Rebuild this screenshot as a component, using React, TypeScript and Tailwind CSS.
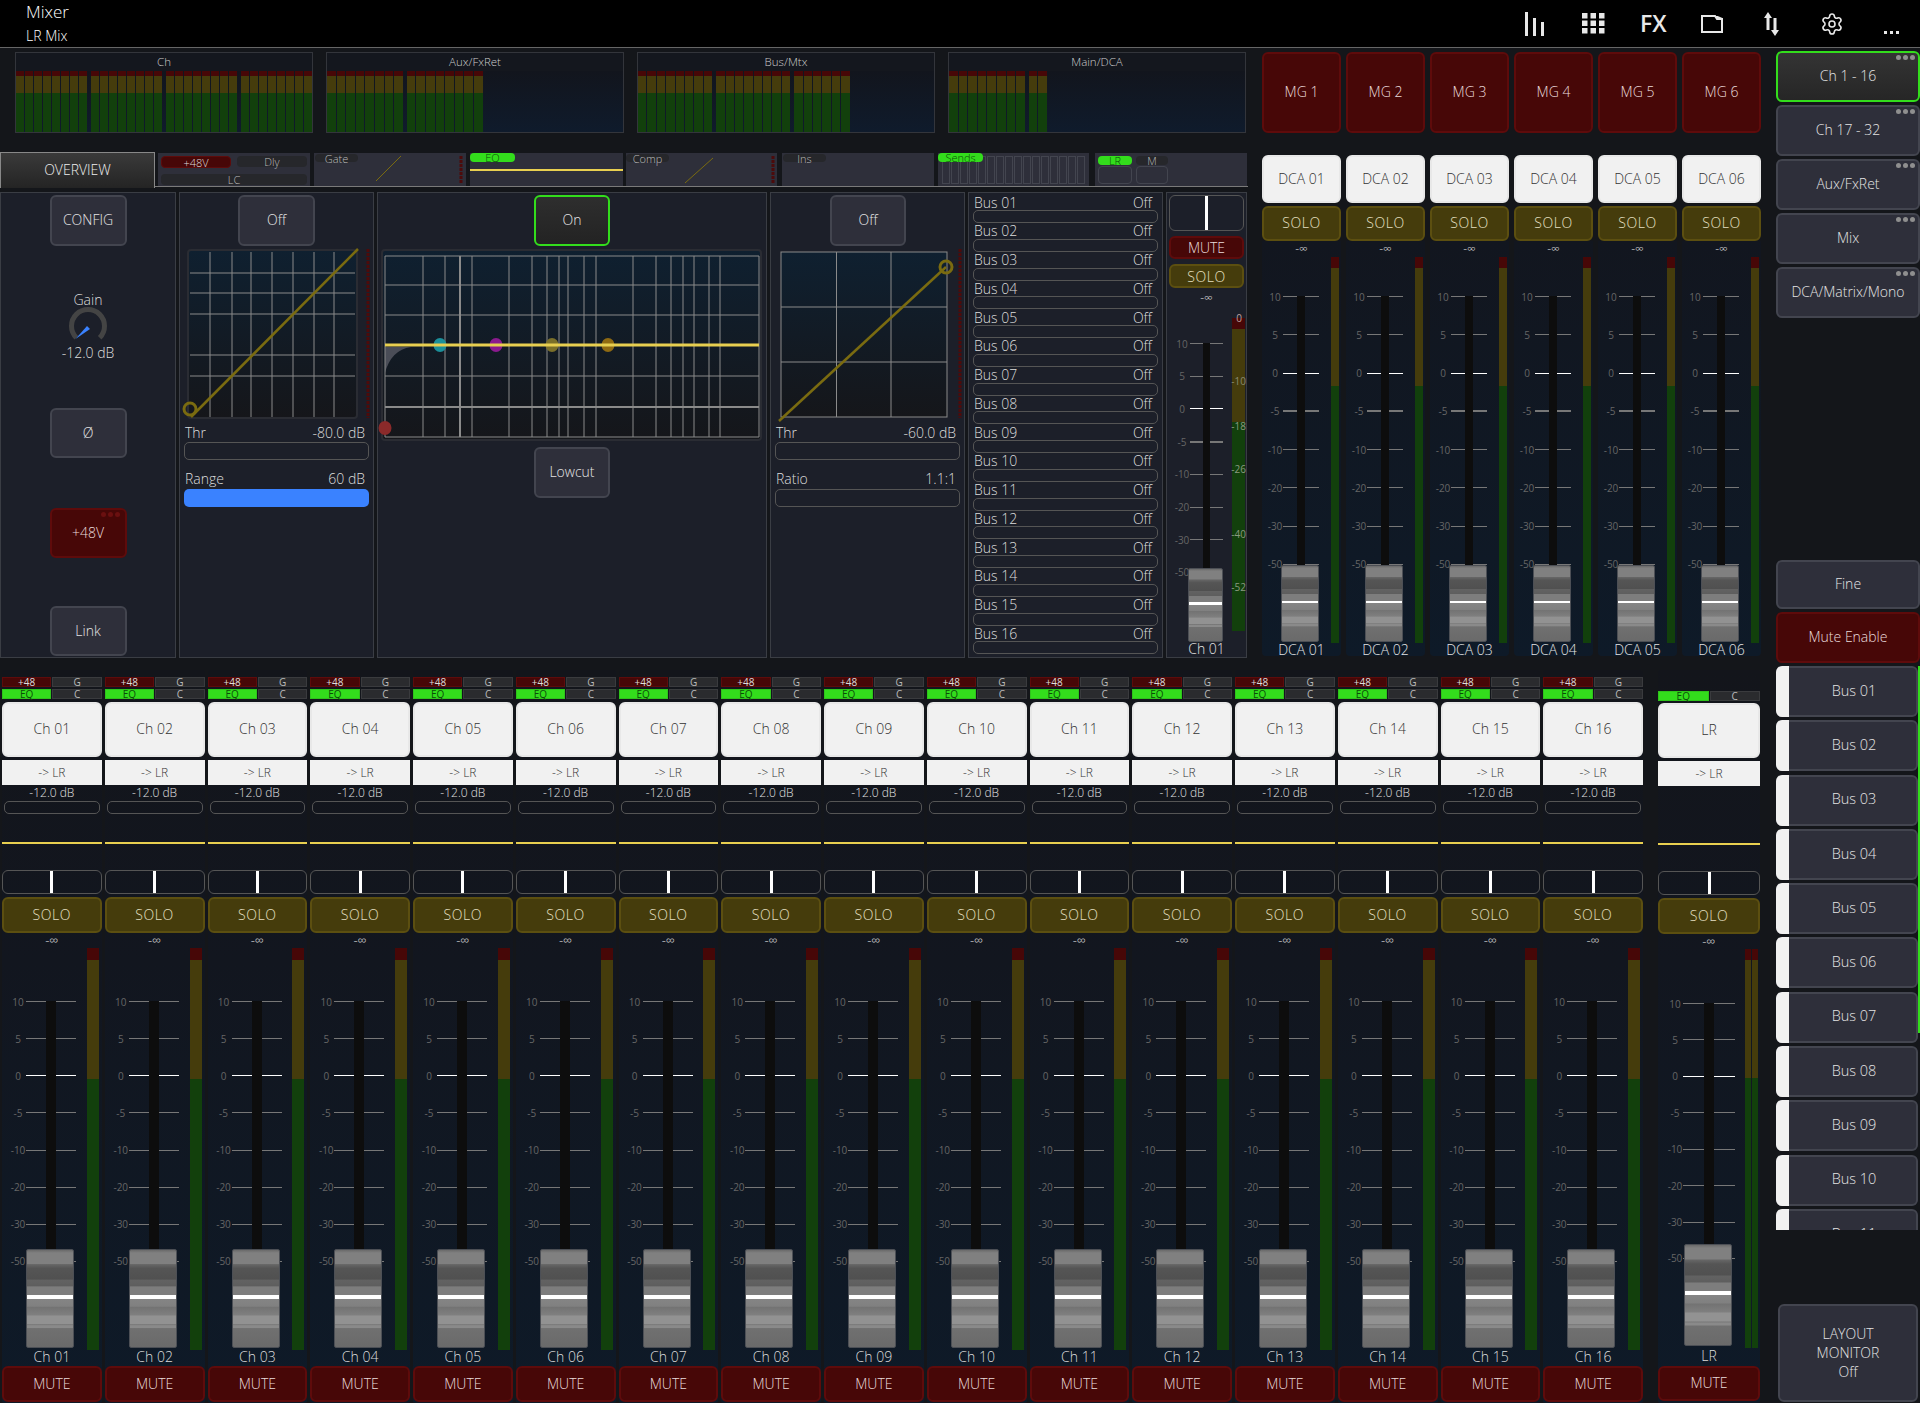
import { Settings } from 'lucide-react';

const btn = 'flex items-center justify-center rounded-[6px] border-2 border-[#43454f] bg-[#2e2f3a] pb-[2px] text-[14px] text-[#e4e4e4]';
const solo = 'flex items-center justify-center rounded-[6px] border-2 border-[#5c4f10] bg-[#453c0c] pb-[2px] text-[14px] tracking-[0.6px] text-[#e6e0c4]';
const mute = 'flex items-center justify-center rounded-[6px] border-2 border-[#5e0b0b] bg-[#470707] pb-[2px] text-[14px] text-[#eadcdc]';
const white = 'flex items-center justify-center rounded-[6px] border-2 border-[#e8e8e8] bg-[#f1f1f1] pb-[2px] text-[14px] text-[#333]';
const slider = 'rounded-[5px] border border-[#555] ';
const panel = 'border border-[#3a3d44] bg-[#1c1f29]';
const capBg = 'rounded-[2px] border border-[#4c4f55] bg-[linear-gradient(to_bottom,#6a6a6a_0%,#808080_3%,#808080_14%,#666_15%,#555_19%,#505050_30%,#626262_31%,#5e5e5e_37%,#7d7d7d_38%,#7d7d7d_46%,#fff_46%,#fff_50%,#858585_50%,#808080_58%,#737373_59%,#7f7f7f_67%,#929292_68%,#929292_76%,#777_77%,#8a8a8a_78%,#8a8a8a_80%,#707070_81%,#6a6a6a_100%)]';

const ticks = ['10', '5', '0', '-5', '-10', '-20', '-30', '-50'];

const faders = {
  ch: { area: 'h-[402px]', list: 'mt-[53px] h-[261px]', label: 'w-[24px] pl-[8px]', line: 'w-[20px]', gap: 'w-[10px]', track: 'left-[44px] w-[10px] top-[53px] h-[248px]', cap: 'left-[24px] w-[48px] top-[301px] h-[99px]', meter: 'h-[402px] w-[12px] mr-[3px]', red: 'h-[12px]', yellow: 'h-[119px]' },
  dca: { area: 'h-[386px]', list: 'mt-[39px] h-[269px]', label: 'w-[21px] pl-[5px]', line: 'w-[14px]', gap: 'w-[8px]', track: 'left-[35px] w-[8px] top-[39px] h-[269px]', cap: 'left-[19px] w-[38px] top-[308px] h-[77px]', meter: 'h-[386px] w-[8px] mr-[2px]', red: 'h-[11px]', yellow: 'h-[118px]' },
  one: { area: 'h-[324px]', list: 'mt-[25px] h-[230px]', label: 'w-[23px] pl-[7px]', line: 'w-[13px]', gap: 'w-[7px]', track: 'left-[36px] w-[7px] top-[25px] h-[225px]', cap: 'left-[21px] w-[35px] top-[250px] h-[74px]', meter: 'h-[313px] w-[13px] mr-[1px]', red: 'h-[11px]', yellow: 'h-[93px]' },
  lr: { area: 'h-[399px]', list: 'mt-[54px] h-[256px]', label: 'w-[25px] pl-[9px]', line: 'w-[21px]', gap: 'w-[10px]', track: 'left-[46px] w-[10px] top-[54px] h-[241px]', cap: 'left-[26px] w-[48px] top-[295px] h-[102px]', meter: 'h-[399px] w-[6px]', red: 'h-[11px]', yellow: 'h-[118px]' },
};

const MeterBar = ({ f }: { f: { meter: string; red: string; yellow: string } }) => (
  <div className={`flex shrink-0 flex-col ${f.meter}`}>
    <div className={`bg-[#470707] ${f.red}`} />
    <div className={`bg-[#453c0c] ${f.yellow}`} />
    <div className="flex-1 bg-[#12400c]" />
  </div>
);

const Fader = ({ kind, thick }: { kind: keyof typeof faders; thick?: boolean }) => {
  const f = faders[kind];
  return (
    <div className={`relative flex justify-between ${f.area}`}>
      <div className={`flex flex-col justify-between ${f.list}`}>
        {ticks.map(t => {
          const color = t === '0' ? 'bg-white' : 'bg-[#777]';
          const h = thick && t === '-5' ? 'h-[2px]' : 'h-[1px]';
          return (
            <div key={t} className="flex h-[1px] items-center">
              <div className={`flex justify-center whitespace-nowrap text-[10px] font-normal leading-none text-[#666] ${f.label}`}>{t}</div>
              <div className={`${f.line} ${h} ${color}`} />
              <div className={f.gap} />
              <div className={`${f.line} ${h} ${color}`} />
            </div>
          );
        })}
      </div>
      <div className={`absolute bg-[#0d0d0d] ${f.track}`} />
      <div className={`absolute ${capBg} ${f.cap}`} />
      {kind === 'lr' ? (
        <div className="mr-[2px] flex gap-[1px]">
          <MeterBar f={f} />
          <MeterBar f={f} />
        </div>
      ) : (
        <MeterBar f={f} />
      )}
    </div>
  );
};

const Tag = ({ text, kind }: { text: string; kind: 'red' | 'green' | 'off' }) => {
  const c = kind === 'red' ? 'bg-[#470707] border-[#5e0b0b] text-[#ddd]' : kind === 'green' ? 'bg-[#33dd1c] border-[#2fc41b] text-[#0b4d08]' : 'bg-[#2a2b2e] border-[#3a3b3e] text-[#bbb]';
  return <div className={`flex h-[10px] items-center justify-center border text-[10px] font-normal leading-none ${c}`}>{text}</div>;
};

const Pan = () => (
  <div className={`mt-[26px] flex h-[24px] justify-center rounded-[6px] border border-[#555]`}>
    <div className="h-full w-[3px] bg-white" />
  </div>
);

const Strip = ({ name }: { name: string }) => (
  <div className="flex h-[733px] flex-col rounded-[2px] bg-[linear-gradient(to_bottom,#13151b_0%,#12161f_40%,#0e1a28_100%)] pt-[7px]">
    <div className="grid grid-cols-2 gap-x-[1px] gap-y-[2px]">
      <Tag text="+48" kind="red" />
      <Tag text="G" kind="off" />
      <Tag text="EQ" kind="green" />
      <Tag text="C" kind="off" />
    </div>
    <div className={`mt-[3px] h-[55px] ${white}`}>{name}</div>
    <div className="mt-[3px] flex h-[25px] items-center justify-center bg-[#f1f1f1] text-[12px] text-[#333]">-&gt; LR</div>
    <div className="flex h-[16px] items-center justify-center text-[12px] text-[#e0e0e0]">-12.0 dB</div>
    <div className={`mx-[2px] h-[13px] ${slider}`} />
    <div className="mt-[28px] h-[2px] bg-[#e8cf50]" />
    <Pan />
    <div className={`mt-[3px] h-[36px] ${solo}`}>SOLO</div>
    <div className="flex h-[15px] items-center justify-center text-[13px] leading-none text-[#ddd]">-∞</div>
    <Fader kind="ch" />
    <div className="flex h-[14px] items-center justify-center text-[14px] leading-none text-[#ddd]">{name}</div>
    <div className={`mt-[2px] h-[36px] ${mute}`}>MUTE</div>
  </div>
);

const LrStrip = () => (
  <div className="ml-[15px] flex h-[733px] w-[102px] flex-col rounded-[2px] bg-[linear-gradient(to_bottom,#13151b_0%,#12161f_40%,#0e1a28_100%)] pt-[21px]">
    <div className="grid grid-cols-2 gap-x-[1px]">
      <Tag text="EQ" kind="green" />
      <Tag text="C" kind="off" />
    </div>
    <div className={`mt-[2px] h-[55px] ${white}`}>LR</div>
    <div className="mt-[3px] flex h-[25px] items-center justify-center bg-[#f1f1f1] text-[12px] text-[#333]">-&gt; LR</div>
    <div className="mt-[57px] h-[2px] bg-[#e8cf50]" />
    <Pan />
    <div className={`mt-[3px] h-[36px] ${solo}`}>SOLO</div>
    <div className="flex h-[15px] items-center justify-center text-[13px] leading-none text-[#ddd]">-∞</div>
    <Fader kind="lr" />
    <div className="flex h-[16px] items-center justify-center text-[14px] leading-none text-[#ddd]">LR</div>
    <div className={`mt-[2px] h-[35px] ${mute}`}>MUTE</div>
  </div>
);

const DcaStrip = ({ i }: { i: number }) => {
  const name = `DCA 0${i}`;
  return (
    <div className="w-[79px]">
      <div className={`h-[48px] ${white}`}>{name}</div>
      <div className={`mt-[3px] h-[35px] ${solo}`}>SOLO</div>
      <div className="rounded-b-[4px] bg-[linear-gradient(to_bottom,#12161f,#0e1a28)]">
        <div className="flex h-[16px] items-center justify-center text-[12px] leading-none text-[#ddd]">-∞</div>
        <Fader kind="dca" thick />
        <div className="flex h-[13px] items-center justify-center text-[14px] leading-none text-[#e4e4e4]">{name}</div>
      </div>
    </div>
  );
};

const MeterGroup = ({ title, groups, step }: { title: string; groups: number[]; step: string }) => (
  <div className="flex h-[81px] w-[298px] flex-col border border-[#33353b]">
    <div className="flex h-[18px] items-center justify-center bg-[#14171e] text-[11.5px] text-[#ccc]">{title}</div>
    <div className="flex flex-1 gap-[4px] bg-[linear-gradient(to_bottom,#12151d,#0f1b2c)]">
      {groups.map((n, g) => (
        <div key={g} className="flex gap-[1px]">
          {Array.from({ length: n }).map((_, b) => (
            <div key={b} className={`flex flex-col ${step}`}>
              <div className="h-[5px] bg-[#470707]" />
              <div className="h-[17px] bg-[#453c0c]" />
              <div className="flex-1 bg-[#12400c]" />
            </div>
          ))}
        </div>
      ))}
    </div>
  </div>
);

const Pill = ({ text, on, cls }: { text: string; on?: boolean; cls: string }) => (
  <div className={`flex items-center justify-center rounded-[4px] text-[11px] leading-none ${on ? 'bg-[#33dd1c] text-[#0b4d08]' : 'bg-[#26272b] text-[#bbb]'} ${cls}`}>{text}</div>
);

const RedDash = ({ x, y1, y2 }: { x: number; y1: number; y2: number }) => (
  <line x1={x} x2={x} y1={y1} y2={y2} stroke="#4d0b0b" strokeWidth={3} strokeDasharray="3 1" />
);

const GateGraph = () => {
  const vs = [211, 233, 252, 273, 294, 315, 335];
  const hs = [273, 293, 314, 355, 376];
  return (
    <svg width={190} height={177} viewBox="181 246 190 177" className="block">
      <defs>
        <linearGradient id="gg" x1="0" y1="0" x2="0" y2="1">
          <stop offset="0" stopColor="#0f2030" />
          <stop offset="1" stopColor="#15161a" />
        </linearGradient>
      </defs>
      <rect x={189} y={250} width={169} height={168} rx={3} fill="url(#gg)" stroke="#2a2c33" strokeWidth={2} />
      {vs.map(x => <line key={x} x1={x} x2={x} y1={252} y2={417} stroke="#8a8a8a" />)}
      {hs.map(y => <line key={y} x1={191} x2={356} y1={y} y2={y} stroke="#8a8a8a" />)}
      <line x1={192} y1={417} x2={359} y2={249} stroke="#7a6b10" strokeWidth={2.5} />
      <circle cx={191} cy={409} r={6} fill="none" stroke="#7a6b10" strokeWidth={3} />
      <RedDash x={369} y1={249} y2={418} />
    </svg>
  );
};

const EqGraph = () => {
  const vs = [424, 446, 461, 473, 510, 533, 548, 560, 569, 585, 597, 634, 657, 672, 684, 695, 710, 721];
  const hs = [256, 285, 315, 376, 407, 437];
  const dots = [[441, '#1b8f9a'], [497, '#8b1a8e'], [553, '#7a6f2a'], [609, '#8f6a12']] as const;
  return (
    <svg width={385} height={196} viewBox="379 246 385 196" className="block">
      <defs>
        <linearGradient id="eq" x1="0" y1="0" x2="0" y2="1">
          <stop offset="0" stopColor="#0f2030" />
          <stop offset="1" stopColor="#15161a" />
        </linearGradient>
      </defs>
      <rect x={383} y={250} width={379} height={190} rx={3} fill="url(#eq)" stroke="#2a2c33" strokeWidth={2} />
      <path d="M386 373 Q392 350 412 347 L386 347 Z" fill="#4a4d57" />
      {vs.map(x => <line key={x} x1={x} x2={x} y1={256} y2={437} stroke="#8a8a8a" strokeWidth={x === 461 ? 2 : 1} />)}
      <line x1={386} x2={386} y1={256} y2={437} stroke="#8a8a8a" />
      <line x1={760} x2={760} y1={256} y2={437} stroke="#8a8a8a" />
      {hs.map(y => <line key={y} x1={386} x2={760} y1={y} y2={y} stroke="#8a8a8a" strokeWidth={y === 407 ? 2 : 1} />)}
      {dots.map(([x, c]) => <ellipse key={x} cx={x} cy={345} rx={6.5} ry={7} fill={c} />)}
      <line x1={386} x2={760} y1={345} y2={345} stroke="#e8cf50" strokeWidth={3} />
      <ellipse cx={386} cy={428} rx={6.5} ry={7} fill="#8a2a2a" />
    </svg>
  );
};

const CompGraph = () => (
  <svg width={190} height={177} viewBox="776 246 190 177" className="block">
    <defs>
      <linearGradient id="cg" x1="0" y1="0" x2="0" y2="1">
        <stop offset="0" stopColor="#0f2030" />
        <stop offset="1" stopColor="#15161a" />
      </linearGradient>
    </defs>
    <rect x={782} y={252} width={166} height={165} fill="url(#cg)" stroke="#8a8a8a" />
    <line x1={837.5} x2={837.5} y1={252} y2={417} stroke="#8a8a8a" />
    <line x1={892} x2={892} y1={252} y2={417} stroke="#8a8a8a" />
    <line x1={782} x2={948} y1={307} y2={307} stroke="#8a8a8a" />
    <line x1={782} x2={948} y1={362} y2={362} stroke="#8a8a8a" />
    <line x1={780} y1={421} x2={947} y2={267} stroke="#7a6b10" strokeWidth={2.5} />
    <circle cx={947} cy={267} r={6} fill="none" stroke="#7a6b10" strokeWidth={3} />
    <RedDash x={961} y1={249} y2={418} />
  </svg>
);

const Knob = () => (
  <svg width={44} height={36} viewBox="0 0 44 36" className="-mt-[5px] block">
    <path d="M10.3 32.7 A16.5 16.5 0 1 1 33.7 32.7" fill="none" stroke="#444" strokeWidth={5} />
    <path d="M9.5 34 L21 21 L24 24 Z" fill="#3a82ff" />
  </svg>
);

const Labeled = ({ l, r }: { l: string; r: string }) => (
  <div className="flex h-[14px] items-center justify-between px-[1px] text-[14px] leading-none text-[#ddd]">
    <span>{l}</span>
    <span className="mr-[3px]">{r}</span>
  </div>
);

const BusRow = ({ i }: { i: number }) => (
  <div className="flex h-[29px] flex-col">
    <div className="flex h-[15px] items-center justify-between px-[1px] pr-[6px] text-[14px] leading-none text-[#ddd]">
      <span>Bus {String(i).padStart(2, '0')}</span>
      <span>Off</span>
    </div>
    <div className={`h-[13px] ${slider}`} />
  </div>
);

const OverviewPanels = () => (
  <div className="mt-[5px] flex h-[466px] gap-[3px] overflow-hidden">
    {/* input */}
    <div className={`flex w-[176px] flex-col items-center pt-[2px] ${panel}`}>
      <div className={`h-[51px] w-[77px] ${btn}`}>CONFIG</div>
      <div className="mt-[44px] h-[20px] text-[14px] leading-[20px] text-[#ddd]">Gain</div>
      <Knob />
      <div className="mt-[2px] text-[14px] leading-[20px] text-[#ddd]">-12.0 dB</div>
      <div className={`mt-[45px] h-[50px] w-[77px] ${btn}`}>Ø</div>
      <div className={`relative mt-[50px] h-[50px] w-[77px] ${mute}`}>
        +48V
        <div className="absolute right-[5px] top-[2px] flex gap-[2px]">
          {[0, 1, 2].map(d => <div key={d} className="h-[5px] w-[5px] rounded-full bg-[#6a1010]" />)}
        </div>
      </div>
      <div className={`mt-[48px] h-[50px] w-[77px] ${btn}`}>Link</div>
    </div>
    {/* gate */}
    <div className={`flex w-[195px] flex-col pt-[2px] ${panel}`}>
      <div className={`mx-auto h-[51px] w-[77px] ${btn}`}>Off</div>
      <GateGraph />
      <div className="mt-[3px] px-[4px]">
        <Labeled l="Thr" r="-80.0 dB" />
        <div className={`mt-[2px] h-[18px] ${slider}`} />
        <div className="mt-[12px]"><Labeled l="Range" r="60 dB" /></div>
        <div className="mt-[3px] h-[18px] rounded-[5px] bg-[#3a82ff]" />
      </div>
    </div>
    {/* eq */}
    <div className={`flex w-[390px] flex-col pt-[2px] ${panel}`}>
      <div className="ml-[156px] flex h-[51px] w-[76px] items-center justify-center rounded-[6px] border-2 border-[#33dd1c] bg-[linear-gradient(to_bottom,#2e2e2e,#232323)] pb-[2px] text-[14px] text-[#e4e4e4]">On</div>
      <EqGraph />
      <div className={`ml-[156px] mt-[5px] h-[51px] w-[76px] ${btn}`}>Lowcut</div>
    </div>
    {/* comp */}
    <div className={`flex w-[195px] flex-col pt-[2px] ${panel}`}>
      <div className={`ml-[59px] h-[51px] w-[76px] ${btn}`}>Off</div>
      <div className="ml-[4px]"><CompGraph /></div>
      <div className="mt-[3px] px-[4px]">
        <Labeled l="Thr" r="-60.0 dB" />
        <div className={`mt-[2px] h-[18px] ${slider}`} />
        <div className="mt-[12px]"><Labeled l="Ratio" r="1.1:1" /></div>
        <div className={`mt-[3px] h-[18px] ${slider}`} />
      </div>
    </div>
    {/* sends */}
    <div className={`flex w-[195px] flex-col justify-between px-[4px] pb-[2px] pt-[2px] ${panel}`}>
      {Array.from({ length: 16 }).map((_, i) => <BusRow key={i} i={i + 1} />)}
    </div>
    {/* channel */}
    <div className={`relative flex w-[81px] flex-col pt-[2px] ${panel}`}>
      <div className="mx-[2px] flex h-[36px] justify-center rounded-[6px] border border-[#555]">
        <div className="h-full w-[3px] bg-white" />
      </div>
      <div className={`mx-[2px] mt-[5px] h-[23px] ${mute} !pb-0`}>MUTE</div>
      <div className={`mx-[2px] mt-[5px] h-[24px] ${solo} !pb-0`}>SOLO</div>
      <div className="flex h-[30px] items-start justify-center pt-[4px] text-[12px] leading-none text-[#ddd]">-∞</div>
      <Fader kind="one" thick />
      <div className="absolute right-[4px] top-[120px] text-[10px] font-normal leading-none text-[#c0a0a0]">0</div>
      <div className="absolute right-[0px] top-[183px] text-[10px] font-normal leading-none text-[#8a8a70]">-10</div>
      <div className="absolute right-[0px] top-[228px] text-[10px] font-normal leading-none text-[#8a9a80]">-18</div>
      <div className="absolute right-[0px] top-[271px] text-[10px] font-normal leading-none text-[#8a9a80]">-26</div>
      <div className="absolute right-[0px] top-[336px] text-[10px] font-normal leading-none text-[#8a9a80]">-40</div>
      <div className="absolute right-[0px] top-[389px] text-[10px] font-normal leading-none text-[#8a9a80]">-52</div>
      <div className="flex h-[14px] items-center justify-center text-[14px] leading-none text-[#e4e4e4]">Ch 01</div>
    </div>
  </div>
);

const cell = 'relative h-[33px] bg-[#2e2f3a]';

const TabRow = () => (
  <div className="mt-[19px] flex h-[35px] border-b border-[#7a7a7a]">
    <div className="flex h-[36px] w-[155px] items-center justify-center border-x border-t border-[#888] bg-[linear-gradient(to_bottom,#3a3a3a,#242424)] pb-[2px] text-[14px] text-[#eee]">OVERVIEW</div>
    <div className={`ml-[3px] grid w-[152px] grid-cols-2 gap-x-[6px] gap-y-[5px] px-[3px] pt-[3px] ${cell} mt-[1px]`}>
      <Pill text="+48V" cls="h-[12px] border border-[#5e0b0b] !bg-[#470707] !text-[#ddd]" />
      <Pill text="Dly" cls="h-[11px]" />
      <Pill text="LC" cls="col-span-2 h-[11px]" />
    </div>
    <div className={`ml-[4px] w-[152px] ${cell} mt-[1px]`}>
      <Pill text="Gate" cls="absolute left-[1px] top-[1px] h-[8px] w-[43px]" />
      <svg width={152} height={33} className="block">
        <line x1={62} y1={28} x2={87} y2={3} stroke="#7a6b10" />
        <RedDash x={147} y1={3} y2={31} />
      </svg>
    </div>
    <div className={`ml-[4px] w-[153px] ${cell} mt-[1px]`}>
      <Pill text="EQ" on cls="absolute left-0 top-0 h-[9px] w-[45px]" />
      <div className="mt-[16px] h-[2px] bg-[#e8cf50]" />
    </div>
    <div className={`ml-[3px] w-[151px] ${cell} mt-[1px]`}>
      <Pill text="Comp" cls="absolute left-0 top-[1px] h-[8px] w-[43px]" />
      <svg width={151} height={33} className="block">
        <line x1={59} y1={30} x2={87} y2={5} stroke="#7a6b10" />
        <RedDash x={147} y1={3} y2={31} />
      </svg>
    </div>
    <div className={`ml-[5px] w-[152px] ${cell} mt-[1px]`}>
      <Pill text="Ins" cls="absolute left-[1px] top-[1px] h-[8px] w-[43px]" />
    </div>
    <div className={`ml-[4px] w-[151px] ${cell} mt-[1px]`}>
      <Pill text="Sends" on cls="absolute left-0 top-0 h-[9px] w-[45px]" />
      <div className="flex gap-[1px] pl-[4px] pt-[3px]">
        {Array.from({ length: 16 }).map((_, i) => <div key={i} className="h-[28px] w-[8px] border border-[#43454f]" />)}
      </div>
    </div>
    <div className={`ml-[6px] w-[152px] ${cell} mt-[1px] pl-[3px] pt-[3px]`}>
      <div className="flex gap-[4px]">
        <Pill text="LR" on cls="h-[9px] w-[34px]" />
        <Pill text="M" cls="h-[9px] w-[32px]" />
      </div>
      <div className="mt-[1px] flex gap-[4px]">
        <div className="h-[18px] w-[34px] rounded-[4px] border border-[#43454f]" />
        <div className="h-[18px] w-[32px] rounded-[4px] border border-[#43454f]" />
      </div>
    </div>
  </div>
);

const SideBtn = ({ label, active, dots }: { label: string; active?: boolean; dots?: boolean }) => (
  <div className={`relative h-[51px] ${active ? 'flex items-center justify-center rounded-[6px] border-2 border-[#33dd1c] bg-[linear-gradient(to_bottom,#343434,#262626)] pb-[2px] text-[14px] text-[#e4e4e4]' : btn}`}>
    {label}
    {dots && (
      <div className="absolute right-[3px] top-[2px] flex gap-[2px]">
        {[0, 1, 2].map(d => <div key={d} className="h-[5px] w-[5px] rounded-full bg-[#8f8f8f]" />)}
      </div>
    )}
  </div>
);

const HeaderIcons = () => (
  <div className="flex items-center">
    <svg width={20} height={24} viewBox="0 0 20 24" className="ml-[1525px]" fill="#e8e8e8">
      <rect x={0} y={0} width={3} height={24} />
      <rect x={8} y={6} width={3} height={18} />
      <rect x={16} y={10} width={3} height={14} />
    </svg>
    <svg width={23} height={21} viewBox="0 0 23 21" className="ml-[37px]" fill="#e8e8e8">
      {[0, 8.5, 17].flatMap(x => [0, 7.5, 15].map(y => <rect key={`${x}-${y}`} x={x} y={y} width={5.5} height={5.5} />))}
    </svg>
    <div className="ml-[35px] w-[25px] text-[23px] font-semibold leading-none text-[#e8e8e8]">FX</div>
    <svg width={22} height={18} viewBox="0 0 22 18" className="ml-[36px]" fill="none" stroke="#e8e8e8" strokeWidth={2}>
      <path d="M1 1 H14 L16 4 H21 V17 H1 Z M14 1 L21 4" />
    </svg>
    <svg width={15} height={24} viewBox="0 0 15 24" className="ml-[41px]" fill="#e8e8e8">
      <path d="M4 0 L8 6 H5.5 V18 H2.5 V6 H0 Z" />
      <path d="M11 24 L15 18 H12.5 V6 H9.5 V18 H7 Z" />
    </svg>
    <Settings className="ml-[41px] h-[24px] w-[24px] text-[#e8e8e8]" strokeWidth={1.6} />
    <div className="ml-[40px] flex gap-[3px] pt-[18px]">
      {[0, 1, 2].map(d => <div key={d} className="h-[3px] w-[3px] bg-[#e8e8e8]" />)}
    </div>
  </div>
);

export default function App() {
  const chs = Array.from({ length: 16 }).map((_, i) => `Ch ${String(i + 1).padStart(2, '0')}`);
  return (
    <div className="flex h-[1403px] w-[1920px] flex-col overflow-hidden bg-[#14161a] font-['Open_Sans','Noto_Sans',sans-serif] font-light">
      <div className="relative flex h-[48px] shrink-0 items-center border-b border-[#666] bg-black">
        <div className="absolute left-[26px] top-0 text-white">
          <div className="mt-[2px] text-[17px] leading-[20px]">Mixer</div>
          <div className="mt-[5px] text-[14px] leading-[18px]">LR Mix</div>
        </div>
        <HeaderIcons />
      </div>
      <div className="flex flex-1">
        <div className="flex w-[1776px] flex-col">
          <div className="flex h-[622px]">
            <div className="w-[1248px] pt-[4px]">
              <div className="ml-[15px] flex gap-[13px]">
                <MeterGroup title="Ch" groups={[8, 8, 8, 8]} step="w-[8px]" />
                <MeterGroup title="Aux/FxRet" groups={[8, 8]} step="w-[8.6px]" />
                <MeterGroup title="Bus/Mtx" groups={[8, 8, 6]} step="w-[8.4px]" />
                <MeterGroup title="Main/DCA" groups={[8, 2]} step="w-[8.6px]" />
              </div>
              <TabRow />
              <OverviewPanels />
            </div>
            <div className="ml-[14px] pt-[4px]">
              <div className="flex gap-[5px]">
                {[1, 2, 3, 4, 5, 6].map(i => <div key={i} className={`h-[81px] w-[79px] ${mute}`}>MG {i}</div>)}
              </div>
              <div className="mt-[22px] flex gap-[5px]">
                {[1, 2, 3, 4, 5, 6].map(i => <DcaStrip key={i} i={i} />)}
              </div>
            </div>
          </div>
          <div className="flex">
            <div className="ml-[2px] grid w-[1641px] grid-cols-[repeat(16,minmax(0,1fr))] gap-[3px]">
              {chs.map(c => <Strip key={c} name={c} />)}
            </div>
            <LrStrip />
          </div>
        </div>
        <div className="relative w-[144px] pt-[3px]">
          <div className="flex flex-col gap-[3px]">
            <SideBtn label="Ch 1 - 16" active dots />
            <SideBtn label="Ch 17 - 32" dots />
            <SideBtn label="Aux/FxRet" dots />
            <SideBtn label="Mix" dots />
            <SideBtn label="DCA/Matrix/Mono" dots />
          </div>
          <div className={`mt-[242px] h-[49px] ${btn}`}>Fine</div>
          <div className={`mt-[3px] h-[51px] ${mute}`}>Mute Enable</div>
          <div className="mt-[3px] flex h-[564px] flex-col gap-[3.3px] overflow-hidden pr-[2px]">
            {Array.from({ length: 11 }).map((_, i) => (
              <div key={i} className="flex h-[51px] shrink-0 overflow-hidden rounded-[6px] bg-[#2e2f3a]">
                <div className="w-[13px] shrink-0 bg-[#f1f1f1]" />
                <div className="flex flex-1 items-center justify-center rounded-r-[6px] border-2 border-l-0 border-[#43454f] pb-[2px] pl-[3px] text-[14.5px] text-[#e4e4e4]">Bus {String(i + 1).padStart(2, '0')}</div>
              </div>
            ))}
          </div>
          <div className="absolute right-0 top-[618px] h-[367px] w-[2px] bg-[#33dd1c]" />
          <div className={`ml-[2px] mr-[2px] mt-[74px] h-[98px] text-center leading-[19px] ${btn}`}>LAYOUT<br />MONITOR<br />Off</div>
        </div>
      </div>
    </div>
  );
}
